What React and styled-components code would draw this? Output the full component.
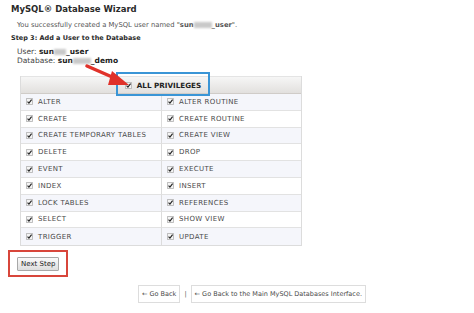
import React from 'react';
import styled, { createGlobalStyle } from 'styled-components';

const Global = createGlobalStyle`
	html, body {
		margin: 0;
		padding: 0;
		background: #ffffff;
	}
	body {
		font-family: "DejaVu Sans", Verdana, sans-serif;
		color: #333333;
		font-size: 7.5px;
	}
`;

const Page = styled.div`
	width: 474px;
	height: 313px;
	padding: 4px 11px 0 11px;
	box-sizing: border-box;
	position: relative;
	overflow: hidden;
`;

const Title = styled.h1`
	font-size: 8.5px;
	font-weight: bold;
	margin: 0;
	color: #2a2a2a;
`;

const Note = styled.p`
	margin: 7px 0 0 6px;
	font-size: 6.8px;
	color: #555;
`;

const Step = styled.h2`
	font-size: 6.5px;
	font-weight: bold;
	margin: 5px 0 0 0;
	color: #2a2a2a;
`;

const Info = styled.div`
	margin: 5px 0 0 6px;
	line-height: 9px;
	color: #444;
	b { color: #222; }
`;

const Blur = styled.span`
	display: inline-block;
	width: ${p => p.w || 16}px;
	height: 6px;
	vertical-align: -1px;
	background: #c9c9c9;
	filter: blur(1px);
`;

const Table = styled.div`
	position: relative;
	margin: 11px 0 0 9px;
	width: 282px;
	border: 1px solid #dcdcdc;
	border-top: none;
	box-sizing: border-box;
`;

const Head = styled.div`
	height: 16px;
	background: linear-gradient(#f6f6f6, #e2e0de);
	border-top: 1px solid #e4e4e4;
	border-bottom: 1px solid #d0ccc8;
	display: flex;
	align-items: center;
	justify-content: center;
	font-weight: bold;
	font-size: 7.2px;
	color: #222;
	gap: 5px;
	padding-left: 4px;
`;

const Grid = styled.div`
	display: grid;
	grid-template-columns: 141px 1fr;
`;

const Cell = styled.div`
	height: 16.8px;
	box-sizing: border-box;
	display: flex;
	align-items: center;
	gap: 5px;
	padding-left: 5px;
	font-size: 7px;
	color: #4a4a4a;
	letter-spacing: 0.35px;
	background: ${p => (p.odd ? '#f5f6fb' : '#ffffff')};
	border-bottom: ${p => (p.last ? 'none' : '1px solid #e2e2e2')};
	border-right: ${p => (p.left ? '1px solid #dcdcdc' : 'none')};
`;

const Highlight = styled.div`
	position: absolute;
	left: 95px;
	top: -4px;
	width: 90px;
	height: 20px;
	border: 2.5px solid #3a95d6;
	pointer-events: none;
`;

const Arrow = styled.svg`
	position: absolute;
	left: 79px;
	top: 60px;
`;

const RedBox = styled.div`
	width: fit-content;
	margin: 4px 0 0 -3px;
	padding: 5px 7px 4px 7px;
	border: 2.5px solid #d8463b;
`;

const Button = styled.button`
	display: block;
	font-family: "DejaVu Sans", Verdana, sans-serif;
	font-size: 7px;
	color: #222;
	padding: 2px 3px;
	background: linear-gradient(#fafafa, #dedede);
	border: 1px solid #a8a8a8;
	border-radius: 1px;
`;

const Links = styled.div`
	display: flex;
	justify-content: center;
	align-items: center;
	gap: 4px;
	margin-top: 8px;
	padding-left: 30px;
	font-size: 6.5px;
	color: #555;
`;

const LinkBox = styled.span`
	border: 1px solid #dddddd;
	padding: 4px 3px 4px 3px;
	color: #4a4a4a;
	background: #fff;
`;

const Check = ({ size = 7 }) => (
	<svg width={size} height={size} viewBox="0 0 10 10">
		<rect x="0.5" y="0.5" width="9" height="9" rx="1" fill="#f4f4f4" stroke="#9a9a9a" />
		<path d="M2.2 5.2 L4.2 7.4 L8 2.4" fill="none" stroke="#222" strokeWidth="1.6" />
	</svg>
);

const left = ['ALTER', 'CREATE', 'CREATE TEMPORARY TABLES', 'DELETE', 'EVENT', 'INDEX', 'LOCK TABLES', 'SELECT', 'TRIGGER'];
const right = ['ALTER ROUTINE', 'CREATE ROUTINE', 'CREATE VIEW', 'DROP', 'EXECUTE', 'INSERT', 'REFERENCES', 'SHOW VIEW', 'UPDATE'];

const App = () => {
	return (
		<>
			<Global />
			<Page>
				<Title>MySQL® Database Wizard</Title>
				<Note>
					You successfully created a MySQL user named "<b>sun<Blur w={18} />_user</b>".
				</Note>
				<Step>Step 3: Add a User to the Database</Step>
				<Info>
					User: <b>sun<Blur w={12} />_user</b>
					<br />
					Database: <b>sun<Blur w={18} />_demo</b>
				</Info>
				<Table>
					<Head>
						<Check /> ALL PRIVILEGES
					</Head>
					<Highlight />
					<Grid>
						{left.map((name, i) => (
							<React.Fragment key={name}>
								<Cell left odd={i % 2 === 0} last={i === left.length - 1}>
									<Check /> {name}
								</Cell>
								<Cell odd={i % 2 === 0} last={i === left.length - 1}>
									<Check /> {right[i]}
								</Cell>
							</React.Fragment>
						))}
					</Grid>
				</Table>
				<RedBox>
					<Button>Next Step</Button>
				</RedBox>
				<Links>
					<LinkBox>← Go Back</LinkBox>
					<span>|</span>
					<LinkBox>← Go Back to the Main MySQL Databases Interface.</LinkBox>
				</Links>
				<Arrow width="60" height="32" viewBox="0 0 60 32">
					<path d="M8 6 L40 20" stroke="#e0322a" strokeWidth="3.5" strokeLinecap="round" />
					<path d="M33 11 L50 25 L29 25 Z" fill="#e0322a" />
				</Arrow>
			</Page>
		</>
	);
};

export default App;
